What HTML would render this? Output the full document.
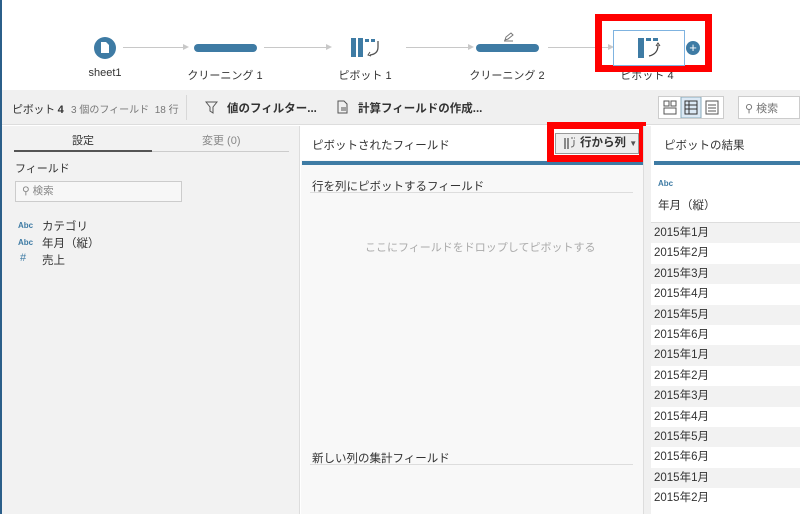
<!DOCTYPE html>
<html style="width:800px;height:514px;overflow:hidden"><head><meta charset="utf-8"><style>
*{margin:0;padding:0;box-sizing:border-box}
body{width:800px;height:514px;overflow:hidden;background:#fff;font-family:"Liberation Sans","Noto Sans CJK JP",sans-serif;font-size:11px;color:#333;position:relative}
.a{position:absolute}
.lbl{position:absolute;font-size:11px;color:#333;text-align:center;width:120px}
.line{position:absolute;height:1px;background:#c8c8c8;top:47px}
.arr{position:absolute;top:44px;width:0;height:0;border-left:6px solid #c8c8c8;border-top:3.5px solid transparent;border-bottom:3.5px solid transparent}
.bar{position:absolute;height:8px;border-radius:4px;background:#3e7ba4;top:44px}
.row{position:absolute;left:651px;width:149px;height:20.4px;font-size:11.5px;padding-left:3px;line-height:20px;color:#333}
</style></head><body>
<div class="a" style="left:0;top:0;width:2px;height:514px;background:#2b5f8a"></div>
<div class="a" style="left:94px;top:37px;width:22px;height:22px;border-radius:50%;background:#3e7ba4"></div>
<svg class="a" style="left:99px;top:41px" width="12" height="14"><path d="M2 1h5l3 3v8H2z" fill="#fff"/></svg>
<div class="lbl" style="left:45px;top:67px">sheet1</div>
<div class="line" style="left:123px;width:60px"></div><div class="arr" style="left:183px"></div>
<div class="bar" style="left:194px;width:63px"></div>
<div class="lbl" style="left:165px;top:67px">クリーニング 1</div>
<div class="line" style="left:264px;width:62px"></div><div class="arr" style="left:326px"></div>
<svg class="a" style="left:350px;top:37px" width="32" height="22"><rect x="1" y="1" width="5" height="19" fill="#3e7ba4"/><rect x="8" y="1" width="5" height="19" fill="#3e7ba4"/><rect x="15" y="2" width="4" height="3" fill="#3e7ba4"/><rect x="21" y="2" width="4" height="3" fill="#3e7ba4"/><path d="M28 4v6q0 7-8 8" stroke="#555" stroke-width="1.3" fill="none"/><path d="M20 15l-2 3 3 1" stroke="#555" fill="none"/></svg>
<div class="lbl" style="left:305px;top:67px">ピボット 1</div>
<div class="line" style="left:406px;width:62px"></div><div class="arr" style="left:468px"></div>
<svg class="a" style="left:503px;top:32px" width="12" height="10"><path d="M2 8l1-3 5-4 2 2-5 4z M1 9h9" stroke="#777" fill="none"/></svg>
<div class="bar" style="left:476px;width:63px"></div>
<div class="lbl" style="left:447px;top:67px">クリーニング 2</div>
<div class="line" style="left:548px;width:60px"></div><div class="arr" style="left:608px"></div>
<div class="lbl" style="left:587px;top:67px">ピボット 4</div>
<div class="a" style="left:595px;top:14px;width:117px;height:58px;border:7px solid #f00"></div>
<div class="a" style="left:613px;top:30px;width:72px;height:36px;border:1px solid #7fb3e0;background:#fff"></div>
<svg class="a" style="left:636px;top:36px" width="30" height="24"><rect x="2" y="2" width="6" height="20" fill="#3e7ba4"/><rect x="10" y="2" width="5" height="3" fill="#3e7ba4"/><rect x="17" y="2" width="5" height="3" fill="#3e7ba4"/><path d="M22 9q0 9-9 11" stroke="#444" stroke-width="1.2" fill="none"/><path d="M20 10l2-3 2 3" stroke="#444" fill="none"/></svg>
<div class="a" style="left:686px;top:41px;width:14px;height:14px;border-radius:50%;background:#3e7ba4;color:#fff;font-size:13px;line-height:13px;text-align:center">+</div>
<div class="a" style="left:2px;top:90px;width:798px;height:35px;background:#f0f0f0;border-bottom:1px solid #ddd"></div>
<div class="a" style="left:12px;top:101px;font-size:11px;letter-spacing:-0.3px">ピボット <b>4</b></div>
<div class="a" style="left:71px;top:101px;font-size:10px;color:#777;white-space:nowrap">3 個のフィールド&nbsp; 18 行</div>
<div class="a" style="left:186px;top:95px;width:1px;height:25px;background:#d8d8d8"></div>
<svg class="a" style="left:205px;top:101px" width="13" height="13"><path d="M1 1h11l-4 5v6l-3-2V6z" stroke="#555" fill="none"/></svg>
<div class="a" style="left:227px;top:100px;font-weight:bold;font-size:11.5px">値のフィルター...</div>
<svg class="a" style="left:337px;top:100px" width="12" height="14"><path d="M1 1h6l3 3v9H1z M4 8h5 M4 10h5" stroke="#555" fill="none"/></svg>
<div class="a" style="left:358px;top:100px;font-weight:bold;font-size:11.5px">計算フィールドの作成...</div>
<div class="a" style="left:658px;top:96px;width:66px;height:23px;border:1px solid #ccc;background:#fff"></div>
<svg class="a" style="left:659px;top:97px" width="64" height="21"><rect x="5" y="4" width="5" height="5" stroke="#555" fill="none"/><rect x="12" y="4" width="5" height="5" stroke="#555" fill="none"/><rect x="5" y="11" width="12" height="6" stroke="#555" fill="none"/><rect x="22" y="0" width="20" height="21" fill="#dce9f5" stroke="#8ab"/><rect x="26" y="4" width="12" height="13" stroke="#333" fill="none"/><path d="M26 8h12M26 12h12M30 4v13" stroke="#333"/><rect x="47" y="4" width="12" height="13" stroke="#555" fill="none"/><path d="M49 8h8M49 11h8M49 14h8" stroke="#555"/></svg>
<div class="a" style="left:738px;top:96px;width:62px;height:23px;border:1px solid #ccc;background:#fff"></div>
<div class="a" style="left:745px;top:100px;font-size:11px;color:#777">⚲ 検索</div>
<div class="a" style="left:2px;top:126px;width:298px;height:388px;background:#f2f2f2;border-right:1px solid #ddd"></div>
<div class="a" style="left:72px;top:132px;font-size:11px">設定</div>
<div class="a" style="left:202px;top:132px;font-size:11px;color:#888">変更 (0)</div>
<div class="a" style="left:152px;top:151px;width:137px;height:1px;background:#ccc"></div>
<div class="a" style="left:14px;top:150px;width:138px;height:2px;background:#555"></div>
<div class="a" style="left:15px;top:160px;font-size:11px">フィールド</div>
<div class="a" style="left:15px;top:181px;width:167px;height:21px;border:1px solid #ccc;background:#f7f7f7;padding-left:6px;line-height:19px;color:#888;font-size:10.5px">⚲ 検索</div>
<div class="a" style="left:18px;top:221px;font-size:8px;color:#3e7ba4;font-weight:bold">Abc</div><div class="a" style="left:42px;top:218px;font-size:11.5px">カテゴリ</div>
<div class="a" style="left:18px;top:238px;font-size:8px;color:#3e7ba4;font-weight:bold">Abc</div><div class="a" style="left:42px;top:235px;font-size:11.5px">年月（縦）</div>
<div class="a" style="left:20px;top:252px;font-size:11px;color:#3e7ba4">#</div><div class="a" style="left:42px;top:252px;font-size:11.5px">売上</div>
<div class="a" style="left:301px;top:126px;width:342px;height:388px;background:#f8f8f8"></div>
<div class="a" style="left:301px;top:126px;width:342px;height:34px;background:#fff"></div>
<div class="a" style="left:312px;top:137px;font-size:11.5px">ピボットされたフィールド</div>
<div class="a" style="left:302px;top:161px;width:341px;height:4px;background:#3e7ba4"></div>
<div class="a" style="left:547px;top:122px;width:99px;height:40px;border:7px solid #f00"></div>
<div class="a" style="left:555px;top:133px;width:84px;height:21px;border:1px solid #999;background:#eee;font-weight:bold;font-size:11.5px;line-height:19px;padding-left:24px">行から列 <span style="font-size:8px;color:#555">▼</span></div>
<svg class="a" style="left:564px;top:137px" width="12" height="13"><path d="M1 1v11M4 1v11" stroke="#666" stroke-width="1.5"/><path d="M7 1h2M10 1h1M10 3v4q0 3-3 3" stroke="#666" fill="none"/></svg>
<div class="a" style="left:312px;top:178px;font-size:11.5px">行を列にピボットするフィールド</div>
<div class="a" style="left:310px;top:192px;width:323px;height:1px;background:#ddd"></div>
<div class="a" style="left:365px;top:239px;font-size:11px;color:#aaa">ここにフィールドをドロップしてピボットする</div>
<div class="a" style="left:312px;top:450px;font-size:11.5px">新しい列の集計フィールド</div>
<div class="a" style="left:310px;top:464px;width:323px;height:1px;background:#ddd"></div>
<div class="a" style="left:643px;top:126px;width:8px;height:388px;background:#f0f0f0;border-left:1px solid #ddd"></div>
<div class="a" style="left:651px;top:126px;width:149px;height:34px;background:#fff"></div>
<div class="a" style="left:664px;top:137px;font-size:11.5px">ピボットの結果</div>
<div class="a" style="left:654px;top:161px;width:146px;height:4px;background:#3e7ba4"></div>
<div class="a" style="left:651px;top:165px;width:149px;height:58px;background:#fff;border-bottom:1px solid #ddd"></div>
<div class="a" style="left:658px;top:179px;font-size:8px;color:#3e7ba4;font-weight:bold">Abc</div>
<div class="a" style="left:658px;top:197px;font-size:11.5px">年月（縦）</div>
<div class="row" style="top:223px;background:#f2f2f2">2015年1月</div>
<div class="row" style="top:243.4px;background:#fff">2015年2月</div>
<div class="row" style="top:263.8px;background:#f2f2f2">2015年3月</div>
<div class="row" style="top:284.2px;background:#fff">2015年4月</div>
<div class="row" style="top:304.6px;background:#f2f2f2">2015年5月</div>
<div class="row" style="top:325px;background:#fff">2015年6月</div>
<div class="row" style="top:345.4px;background:#f2f2f2">2015年1月</div>
<div class="row" style="top:365.8px;background:#fff">2015年2月</div>
<div class="row" style="top:386.2px;background:#f2f2f2">2015年3月</div>
<div class="row" style="top:406.6px;background:#fff">2015年4月</div>
<div class="row" style="top:427px;background:#f2f2f2">2015年5月</div>
<div class="row" style="top:447.4px;background:#fff">2015年6月</div>
<div class="row" style="top:467.8px;background:#f2f2f2">2015年1月</div>
<div class="row" style="top:488.2px;background:#fff;height:25.8px">2015年2月</div>
</body></html>
